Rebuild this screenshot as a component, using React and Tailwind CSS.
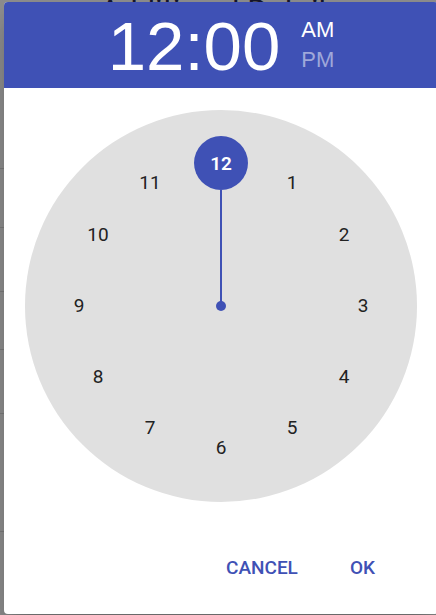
import React from "react";

const numbers = [12, 1, 2, 3, 4, 5, 6, 7, 8, 9, 10, 11];

function Clock() {
  const cx = 196;
  const cy = 195;
  const r = 142;
  return (
    <div className="relative w-[392px] h-[392px] rounded-full bg-[#e0e0e0]">
      {/* hand */}
      <div className="absolute left-[195px] top-[80px] w-[2px] h-[116px] bg-[#3f51b5]" />
      <div className="absolute left-[191px] top-[191px] w-[10px] h-[10px] rounded-full bg-[#3f51b5]" />
      {/* selected thumb */}
      <div className="absolute left-[169px] top-[26px] w-[54px] h-[54px] rounded-full bg-[#3f51b5]" />
      {numbers.map((n, i) => {
        const a = (i * 30 * Math.PI) / 180;
        const x = cx + r * Math.sin(a);
        const y = cy - r * Math.cos(a);
        const selected = n === 12;
        return (
          <span
            key={n}
            className={
              selected
                ? "absolute w-[36px] h-[36px] -translate-x-1/2 -translate-y-1/2 flex items-center justify-center text-[19px] leading-none font-semibold text-white"
                : "absolute w-[36px] h-[36px] -translate-x-1/2 -translate-y-1/2 flex items-center justify-center text-[19px] leading-none font-normal text-[#222222]"
            }
            style={{ left: x, top: y }}
          >
            {n}
          </span>
        );
      })}
    </div>
  );
}

export default function App() {
  const rows = [59, 64, 58, 64, 118];
  return (
    <div
      className="relative w-[436px] h-[615px] overflow-hidden bg-[#8d8d8d]"
      style={{ fontFamily: "Roboto, 'Liberation Sans', sans-serif" }}
    >
      {/* dimmed page behind the dialog */}
      <div className="flex flex-col">
        <div className="h-[169px] border-b border-[#7a7a7a] flex justify-center">
          <h1 className="-mt-[5px] text-[31px] leading-none text-[#15152a] pl-[6px]">
            Additional Details
          </h1>
        </div>
        {rows.map((h, i) => (
          <div
            key={i}
            className="border-b border-[#7a7a7a]"
            style={{ height: h }}
          />
        ))}
      </div>

      {/* dialog */}
      <div className="absolute left-[4px] top-[2px] w-[434px] h-[612px] bg-white rounded-[4px] overflow-hidden flex flex-col shadow-[0_11px_15px_-7px_rgba(0,0,0,0.2),0_24px_38px_3px_rgba(0,0,0,0.14)]">
        <div
          className="h-[86px] bg-[#3f51b5] flex items-center justify-center text-white"
          style={{ fontFamily: "'Liberation Sans', Arial, sans-serif" }}
        >
          <span className="mt-[2px] text-[69px] leading-none">12:00</span>
          <div className="ml-[21px] flex flex-col text-[22px] leading-[30px]">
            <span className="text-white">AM</span>
            <span className="text-white/50">PM</span>
          </div>
        </div>
        <div className="flex justify-center pt-[22px]">
          <Clock />
        </div>
        <div className="mt-[46px] h-[40px] flex items-center justify-end gap-[52px] pr-[63px] text-[19px] font-medium text-[#3f51b5]">
          <span>CANCEL</span>
          <span>OK</span>
        </div>
      </div>
    </div>
  );
}
